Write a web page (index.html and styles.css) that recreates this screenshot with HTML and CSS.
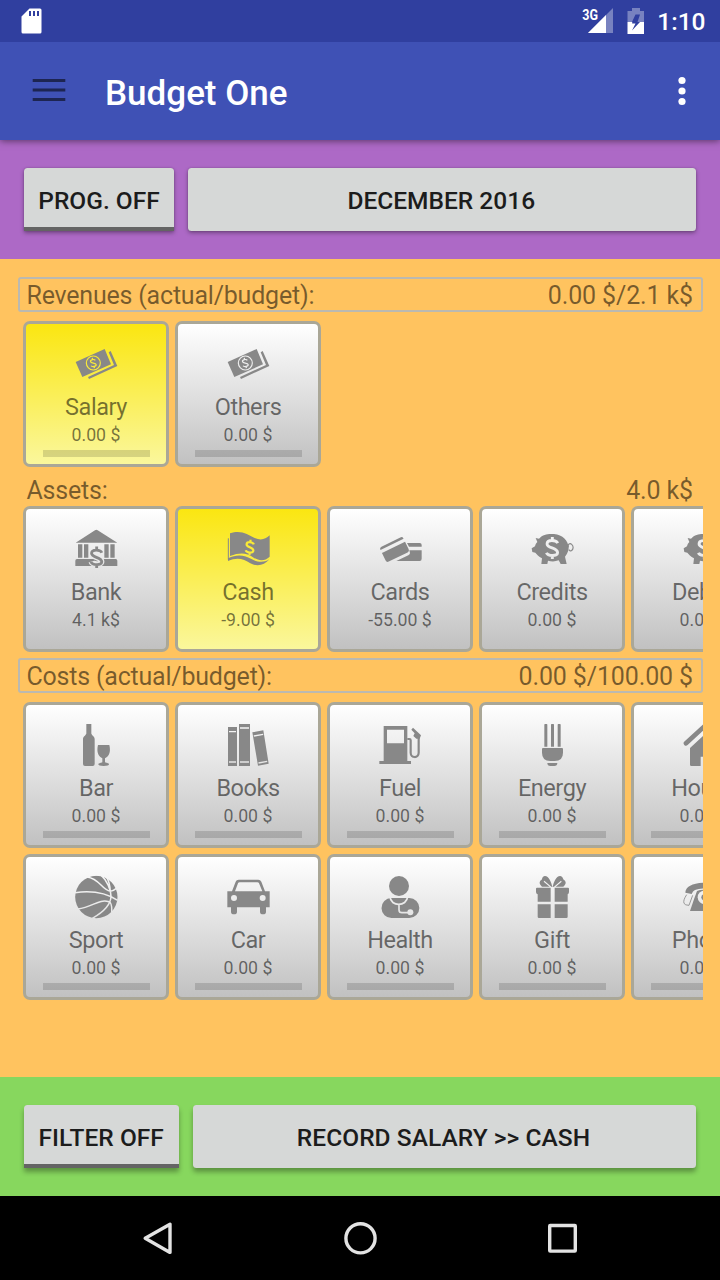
FILE: index.html
```
<!DOCTYPE html>
<html lang="en">
<head>
<meta charset="utf-8">
<title>Budget One</title>
<link rel="stylesheet" href="styles.css">
</head>
<body>
<svg class="defs" width="0" height="0" aria-hidden="true">
  <defs>
    <path id="dollar" d="M9-8C7-14-9-15-9-7C-9 1 9-1 9 8C9 15-8 14-10 8M0-19V-12M0 12V19"/>
    <mask id="m-money" maskUnits="userSpaceOnUse" x="0" y="0" width="130" height="130">
      <rect width="130" height="130" fill="#fff"/>
      <circle cx="55" cy="60" r="21" fill="none" stroke="#000" stroke-width="3.5"/>
      <use href="#dollar" fill="none" stroke="#000" stroke-width="4.5" transform="translate(55 60) rotate(-12) scale(.82)"/>
    </mask>
    <mask id="m-bank" maskUnits="userSpaceOnUse" x="0" y="0" width="130" height="130">
      <rect width="130" height="130" fill="#fff"/>
      <use href="#dollar" fill="none" stroke="#000" stroke-width="11" transform="translate(65 88) scale(1.6)"/>
    </mask>
    <mask id="m-cash" maskUnits="userSpaceOnUse" x="0" y="0" width="130" height="130">
      <rect width="130" height="130" fill="#fff"/>
      <use href="#dollar" fill="none" stroke="#000" stroke-width="5.5" transform="translate(69 58) rotate(4) scale(1.2)"/>
    </mask>
    <mask id="m-pig" maskUnits="userSpaceOnUse" x="0" y="0" width="130" height="130">
      <rect width="130" height="130" fill="#fff"/>
      <use href="#dollar" fill="none" stroke="#000" stroke-width="5" transform="translate(64 60) scale(1.75)"/>
    </mask>
    <mask id="m-ball" maskUnits="userSpaceOnUse" x="-2" y="-2" width="132" height="132">
      <rect x="-2" y="-2" width="132" height="132" fill="#fff"/>
      <path d="M0 50C35 45 85 45 128 73M8 99C55 93 70 68 102 77C111 81 111 95 110 110M36 3C75 8 80 42 106 46C114 45 118 42 124 37M79-2C95 12 108 42 108 60C108 88 82 110 52 127M95 4C102 15 105 30 106 46" fill="none" stroke="#000" stroke-width="4.5"/>
    </mask>
    <mask id="m-health" maskUnits="userSpaceOnUse" x="0" y="0" width="130" height="130">
      <rect width="130" height="130" fill="#fff"/>
      <path d="M33 62C35 93 83 93 86 62M60 86V101Q60 110 69 110H90" fill="none" stroke="#000" stroke-width="5"/>
      <circle cx="94" cy="109" r="9" fill="#000"/>
    </mask>
    <mask id="m-phone" maskUnits="userSpaceOnUse" x="0" y="0" width="130" height="130">
      <rect width="130" height="130" fill="#fff"/>
      <circle cx="64" cy="64" r="20" fill="#000"/>
    </mask>

    <symbol id="money" viewBox="0 0 126 126">
      <path mask="url(#m-money)" d="M2 57L89 18L108 64L22 102Z"/>
      <path d="M107 24L127 69L42 108L39 102L117 66L101 28Z"/>
    </symbol>
    <symbol id="bank" viewBox="0 0 126 126">
      <path mask="url(#m-bank)" d="M2 44L60 7Q64 4 68 7L127 44ZM9 49H22V89H9ZM27 49H40V89H27ZM88 49H101V89H88ZM106 49H119V89H106ZM6 93H122Q127 93 127 98V114H1V98Q1 93 6 93Z"/>
      <use href="#dollar" class="line" stroke-width="5" transform="translate(65 88) scale(1.7)"/>
    </symbol>
    <symbol id="cash" viewBox="0 0 126 126">
      <path mask="url(#m-cash)" d="M9 16C42 5 62 19 83 30C102 38 115 34 128 22V86C114 99 98 100 80 89C58 74 40 73 9 84Z"/>
      <path class="line" stroke-width="3" d="M4 31V95"/>
      <path d="M3 91C32 77 53 82 75 94C92 103 110 105 127 94C112 112 91 117 70 106C51 93 31 87 3 99Z"/>
    </symbol>
    <symbol id="cards" viewBox="0 0 126 126">
      <path d="M84 45H122Q128 45 128 51V56H90ZM91 67H128V92Q128 99 122 99H52L88 82Q93 79 93 75Z"/>
      <g transform="translate(1 59) rotate(-26)">
        <path d="M0 7Q0 0 7 0H70Q77 0 77 7V8H0ZM0 18H77V43Q77 50 70 50H7Q0 50 0 43Z"/>
      </g>
    </symbol>
    <symbol id="pig" viewBox="0 0 126 126">
      <path mask="url(#m-pig)" d="M14 30L24 32C37 17 54 17 69 18C95 20 112 38 113 60C112 72 107 80 102 86L107 108H89L83 97C73 101 61 101 51 98L49 108H31L33 91C23 86 17 79 13 74L4 72L2 61L12 55C13 50 15 46 19 42Z"/>
      <path class="line" stroke-width="3.5" d="M112 58C109 48 117 45 122 49C128 54 128 64 121 68C116 70 113 67 115 64"/>
    </symbol>
    <symbol id="bar" viewBox="0 0 126 126">
      <path d="M34 0H49V28C49 34 59 37 59 46V120Q59 126 53 126H30Q24 126 24 120V46C24 37 34 34 34 28ZM69 63H103C107 79 105 96 90 103V115C97 117 102 118 102 121Q102 126 86 126Q70 126 70 121C70 118 76 117 82 115V103C67 96 65 79 69 63Z"/>
    </symbol>
    <symbol id="books" viewBox="0 0 126 126">
      <path fill-rule="evenodd" d="M3 9H30V126H3ZM6 21V25H27V21ZM6 112V116H27V112ZM36 0H69V126H36ZM39 10V14H66V10ZM39 112V116H66V112Z"/>
      <path fill-rule="evenodd" d="M76 25L109 19L125 119L93 125ZM80 34L81 38L109 33L108 29ZM94 115L95 119L121 114L120 110Z"/>
    </symbol>
    <symbol id="fuel" viewBox="0 0 126 126">
      <path fill-rule="evenodd" d="M14 6H85V111H96V120H1V111H14ZM24 17V58H75V17Z"/>
      <path class="line" stroke-width="6.5" d="M85 45H91Q95 45 95 49V86C95 103 119 104 119 86V34"/>
      <path d="M102 11L126 34L122 44H112L103 36L107 28L97 17Z"/>
    </symbol>
    <symbol id="energy" viewBox="0 0 126 126">
      <path d="M40 2Q40 0 42 0H47Q49 0 49 2V68H40ZM60 2Q60 0 62 0H67Q69 0 69 2V68H60ZM80 2Q80 0 82 0H87Q89 0 89 2V68H80ZM36 72H93Q96 72 96 75V86Q96 111 71 111H58Q33 111 33 86V75Q33 72 36 72ZM49 117H79Q79 126 70 126H58Q49 126 49 117Z"/>
    </symbol>
    <symbol id="house" viewBox="0 0 126 126">
      <path class="line" stroke-width="14" stroke-linecap="round" d="M9 58L64 7L119 58"/>
      <path d="M21 72L64 32L107 72V122Q107 126 103 126H77V98H53V126H25Q21 126 21 122Z"/>
    </symbol>
    <symbol id="ball" viewBox="0 0 126 126">
      <circle mask="url(#m-ball)" cx="64" cy="63" r="63.5"/>
    </symbol>
    <symbol id="car" viewBox="0 0 126 126">
      <path fill-rule="evenodd" d="M1 46H15L26 17Q28 11 35 11H94Q100 11 103 17L114 46H128V94H117V107Q117 115 108 115Q99 115 99 107V94H30V107Q30 115 21 115Q12 115 12 107V94H1ZM24 46H106L96 22Q95 19 91 19H38Q34 19 33 22ZM12 66A9 9 0 1 0 30 66A9 9 0 1 0 12 66ZM98 66A9 9 0 1 0 116 66A9 9 0 1 0 98 66Z"/>
    </symbol>
    <symbol id="health" viewBox="0 0 126 126">
      <circle cx="60" cy="30" r="30"/>
      <path mask="url(#m-health)" d="M37 66H91A30 30 0 0 1 91 126H38A30 30 0 0 1 37 66Z"/>
    </symbol>
    <symbol id="gift" viewBox="0 0 126 126">
      <path d="M18 35H59V77H20V55Q15 54 15 48V38Q15 35 18 35ZM71 35H111Q114 35 114 38V48Q114 54 110 55V77H71ZM20 85H59V126H24Q20 126 20 122ZM71 85H110V122Q110 126 106 126H71Z"/>
      <path fill-rule="evenodd" d="M64 33C61 18 53-1 41 0C35 1 34 6 32 11C25 15 24 21 29 28L33 32H56L38 17L40 14L61 32ZM65 33C68 18 76-1 88 0C94 1 95 6 98 11C105 15 106 21 101 28L97 32H74L92 17L90 14L69 32Z"/>
    </symbol>
    <symbol id="phone" viewBox="0 0 126 126">
      <path d="M7 50C7 32 30 20 64 20C98 20 121 32 121 50L102 54Q99 45 92 42C76 36 52 36 36 42Q29 45 26 54Z"/>
      <path mask="url(#m-phone)" d="M42 45Q64 38 86 45L93 62L108 105H21L33 70Z"/>
      <circle cx="64" cy="64" r="9"/>
      <path class="line" stroke-width="2.500" d="M11 56C3 68 1 76 3 82Q6 88 18 88M29 58L18 88"/>
    </symbol>
  </defs>
</svg>

<div class="screen">
  <header class="status">
    <svg class="sd" viewBox="0 0 22 26"><path fill-rule="evenodd" d="M8.500.500H19Q20.500.500 20.500 2V24Q20.500 25.500 19 25.500H2Q.500 25.500 .500 24V8.500ZM8 3V8H10V3ZM12 3V8H14V3ZM16 3V8H18V3Z"/></svg>
    <svg class="signal" viewBox="0 0 32 26">
      <path d="M31 0V25H6Z" fill-opacity=".35"/>
      <path d="M24 7V25H6Z"/>
      <path class="halo" d="M0 0H18V12H0Z"/>
      <text x="0.300" y="11.500" textLength="15.700" lengthAdjust="spacingAndGlyphs">3G</text>
    </svg>
    <svg class="battery" viewBox="0 0 18 26">
      <path d="M5 0H13V3H17V14H10.500L13 6.500H8.500L5 14H.500V3H5Z" fill-opacity=".35"/>
      <path fill-rule="evenodd" d="M.500 14H5.200V15.500H8.500L5 22.500L13 14H17V26H.500Z"/>
    </svg>
    <span class="clock">1:10</span>
  </header>

  <div class="toolbar">
    <svg class="menu" viewBox="0 0 34 24"><path d="M.7 1H33.300V4H.7ZM.7 10.500H33.300V13.500H.7ZM.7 20H33.300V23H.7Z"/></svg>
    <h1 class="title">Budget One</h1>
    <svg class="more" viewBox="0 0 8 30"><circle cx="4" cy="4.500" r="3.600"/><circle cx="4" cy="15" r="3.600"/><circle cx="4" cy="25.500" r="3.600"/></svg>
  </div>

  <section class="controls controls-top">
    <button class="btn toggle prog">PROG. OFF</button>
    <button class="btn wide">DECEMBER 2016</button>
  </section>

  <main class="content">
    <div class="group boxed"><span>Revenues (actual/budget):</span><span>0.00 $/2.1 k$</span></div>
    <div class="row">
      <div class="tile selected"><svg class="icon"><use href="#money"/></svg><span class="name">Salary</span><span class="amount">0.00 $</span><i class="meter"></i></div>
      <div class="tile"><svg class="icon"><use href="#money"/></svg><span class="name">Others</span><span class="amount">0.00 $</span><i class="meter"></i></div>
    </div>

    <div class="group plain"><span>Assets:</span><span>4.0 k$</span></div>
    <div class="row">
      <div class="tile"><svg class="icon"><use href="#bank"/></svg><span class="name">Bank</span><span class="amount">4.1 k$</span></div>
      <div class="tile selected"><svg class="icon"><use href="#cash"/></svg><span class="name">Cash</span><span class="amount">-9.00 $</span></div>
      <div class="tile"><svg class="icon"><use href="#cards"/></svg><span class="name">Cards</span><span class="amount">-55.00 $</span></div>
      <div class="tile"><svg class="icon"><use href="#pig"/></svg><span class="name">Credits</span><span class="amount">0.00 $</span></div>
      <div class="tile"><svg class="icon"><use href="#pig"/></svg><span class="name">Debits</span><span class="amount">0.00 $</span></div>
    </div>

    <div class="group boxed costs"><span>Costs (actual/budget):</span><span>0.00 $/100.00 $</span></div>
    <div class="row">
      <div class="tile"><svg class="icon"><use href="#bar"/></svg><span class="name">Bar</span><span class="amount">0.00 $</span><i class="meter"></i></div>
      <div class="tile"><svg class="icon"><use href="#books"/></svg><span class="name">Books</span><span class="amount">0.00 $</span><i class="meter"></i></div>
      <div class="tile"><svg class="icon"><use href="#fuel"/></svg><span class="name">Fuel</span><span class="amount">0.00 $</span><i class="meter"></i></div>
      <div class="tile"><svg class="icon"><use href="#energy"/></svg><span class="name">Energy</span><span class="amount">0.00 $</span><i class="meter"></i></div>
      <div class="tile"><svg class="icon"><use href="#house"/></svg><span class="name">House</span><span class="amount">0.00 $</span><i class="meter"></i></div>
    </div>
    <div class="row next">
      <div class="tile"><svg class="icon"><use href="#ball"/></svg><span class="name">Sport</span><span class="amount">0.00 $</span><i class="meter"></i></div>
      <div class="tile"><svg class="icon"><use href="#car"/></svg><span class="name">Car</span><span class="amount">0.00 $</span><i class="meter"></i></div>
      <div class="tile"><svg class="icon"><use href="#health"/></svg><span class="name">Health</span><span class="amount">0.00 $</span><i class="meter"></i></div>
      <div class="tile"><svg class="icon"><use href="#gift"/></svg><span class="name">Gift</span><span class="amount">0.00 $</span><i class="meter"></i></div>
      <div class="tile"><svg class="icon"><use href="#phone"/></svg><span class="name">Phone</span><span class="amount">0.00 $</span><i class="meter"></i></div>
    </div>
  </main>

  <section class="controls controls-bottom">
    <button class="btn toggle filter">FILTER OFF</button>
    <button class="btn wide">RECORD SALARY &gt;&gt; CASH</button>
  </section>

  <nav class="navbar">
    <svg viewBox="0 0 40 40"><path d="M7.200 20.300L32 6.200V34.400Z"/></svg>
    <svg viewBox="0 0 40 40"><circle cx="19.500" cy="20.300" r="14.600"/></svg>
    <svg viewBox="0 0 40 40"><rect x="6.700" y="7.500" width="25.600" height="25.600" rx=".5"/></svg>
  </nav>
</div>
</body>
</html>
```
FILE: styles.css
```
* { box-sizing: border-box; }

body {
  margin: 0;
  font-family: Roboto, "Noto Sans", sans-serif;
}

.defs { position: absolute; }

.screen {
  display: flex;
  flex-direction: column;
  width: 720px;
  height: 1280px;
  overflow: hidden;
}

.status {
  position: relative;
  z-index: 2;
  display: flex;
  align-items: flex-start;
  height: 42px;
  padding: 8px 14.500px 0 21px;
  background: #303f9f;
  fill: #fff;
  color: #fff;
}

.sd { width: 22px; height: 26px; margin-right: auto; }

.signal {
  width: 32px;
  height: 26px;
  margin-right: 13px;
}

.signal text { font-size: 14.5px; font-weight: 700; }
.signal .halo { fill: #303f9f; clip-path: polygon(0 0, 100% 0, 100% 40%, 80% 100%, 0 100%); }

.battery { width: 18px; height: 26px; margin-right: 12px; }

.clock {
  font-size: 24.5px;
  font-weight: 500;
  line-height: 28px;
}

.toolbar {
  position: relative;
  z-index: 1;
  display: flex;
  flex: 0 0 98px;
  align-items: center;
  padding: 0 34.500px 0 32px;
  background: #3f51b5;
  box-shadow: 0 1px 7px rgba(0, 0, 0, .5);
}

.menu { width: 34px; height: 24px; margin-top: -2px; fill: #1d2552; }
.more { width: 8px; height: 30px; margin-left: auto; fill: #fff; }

.title {
  margin: 5px 0 0 39px;
  color: #fff;
  font-size: 35px;
  font-weight: 500;
  line-height: 42px;
}

.controls {
  display: flex;
  flex: 0 0 119px;
  gap: 14px;
  padding: 28px 24.500px 28px 24px;
}

.controls-top { background: #ad69c6; }
.controls-bottom { background: #87d75e; }

.btn {
  height: 63px;
  padding: 2px 1px 0 0;
  border: 0;
  border-radius: 3.500px;
  background: #d6d8d7;
  box-shadow: 0 2px 4px rgba(0, 0, 0, .35), 0 0 2px rgba(0, 0, 0, .2);
  color: #1c1c1c;
  font: 500 24.5px/28px Roboto, sans-serif;
}

.controls-bottom .btn { box-shadow: 0 4px 5px rgba(0, 0, 0, .32); }

.btn.toggle {
  padding: 6px 0 0;
  border-bottom: 4px solid #646464;
  border-radius: 3.500px 3.500px 0 0;
}

.prog { width: 150px; }
.filter { width: 154.500px; letter-spacing: .05px; }
.controls-bottom .wide { letter-spacing: .05px; }
.wide { flex: 1; }

.content {
  flex: 1;
  padding: 18px 17.500px 0 18px;
  background: #ffc35f;
}

.group {
  display: flex;
  justify-content: space-between;
  height: 35px;
  margin-bottom: 9px;
  padding: 2px 7.500px 0 6.500px;
  border: 2px solid transparent;
  color: rgba(0, 0, 0, .54);
  font-size: 25px;
  letter-spacing: -.21px;
  line-height: 29px;
}

.group span + span { letter-spacing: -.13px; }

.group.boxed { border-color: #bbb9b0; border-radius: 3px; }
.group.plain { height: 34px; margin: 5px 0 0; }
.group.costs { margin-top: 6px; }

.row {
  display: flex;
  gap: 6px;
  margin-left: 5px;
  overflow: hidden;
}

.row.next { margin-top: 6px; }

.tile {
  display: flex;
  flex: 0 0 146px;
  flex-direction: column;
  align-items: center;
  height: 146px;
  padding-top: 19px;
  border: 3px solid #aaa797;
  border-radius: 7px;
  background: linear-gradient(#fff, #c1c1c1);
  color: rgba(0, 0, 0, .54);
}

.tile.selected { background: linear-gradient(#fae611, #faf79c); }

.icon { width: 42px; height: 42px; overflow: visible; fill: #888; }
.icon use { overflow: visible; }
symbol { overflow: visible; }
.line { fill: none; stroke: #888; }

.name {
  margin-top: 8px;
  font-size: 23.5px;
  letter-spacing: -.45px;
  line-height: 28px;
}

.amount { margin-top: 1px; font-size: 17.7px; line-height: 26px; }

.meter {
  width: 107px;
  height: 7px;
  margin-top: 2px;
  background: rgba(0, 0, 0, .14);
}

.navbar {
  display: flex;
  flex: 0 0 84px;
  align-items: center;
  justify-content: space-between;
  padding: 0 137px 0 138px;
  background: #000;
}

.navbar svg {
  width: 40px;
  height: 40px;
  fill: none;
  stroke: #e3e3e3;
  stroke-width: 3.400;
  stroke-linejoin: round;
}
```
